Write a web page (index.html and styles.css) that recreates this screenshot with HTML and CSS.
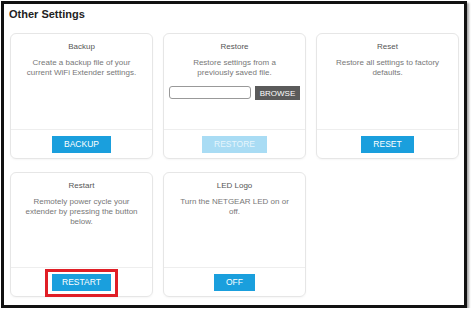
FILE: index.html
```html
<!DOCTYPE html>
<html lang="en">
  <head>
    <meta charset="UTF-8" />
    <meta name="viewport" content="width=device-width, initial-scale=1.0" />
    <title>Other Settings</title>
    <link rel="stylesheet" href="styles.css">
  </head>
  <body>
    <div class="frame">
      <h2 class="section-title">Other Settings</h2>
      <div class="grid">
        <div class="card">
          <div class="card-body">
            <h3>Backup</h3>
            <p>Create a backup file of your current WiFi Extender settings.</p>
          </div>
          <div class="card-foot">
            <button class="btn">BACKUP</button>
          </div>
        </div>
        <div class="card">
          <div class="card-body">
            <h3>Restore</h3>
            <p>Restore settings from a previously saved file.</p>
            <div class="file-row">
              <input type="text" class="file-input" />
              <button class="btn-browse">BROWSE</button>
            </div>
          </div>
          <div class="card-foot">
            <button class="btn" disabled>RESTORE</button>
          </div>
        </div>
        <div class="card">
          <div class="card-body">
            <h3>Reset</h3>
            <p>Restore all settings to factory defaults.</p>
          </div>
          <div class="card-foot">
            <button class="btn">RESET</button>
          </div>
        </div>
        <div class="card">
          <div class="card-body">
            <h3>Restart</h3>
            <p>Remotely power cycle your extender by pressing the button below.</p>
          </div>
          <div class="card-foot">
            <button class="btn highlight">RESTART</button>
          </div>
        </div>
        <div class="card">
          <div class="card-body">
            <h3>LED Logo</h3>
            <p>Turn the NETGEAR LED on or off.</p>
          </div>
          <div class="card-foot">
            <button class="btn">OFF</button>
          </div>
        </div>
      </div>
    </div>
  </body>
</html>
```

FILE: styles.css
```css
body {
  margin: 0;
  background: #fff;
  font-family: "Liberation Sans", Arial, sans-serif;
}
.frame {
  box-sizing: border-box;
  width: 466px;
  height: 307px;
  margin: 1px 0 0 1px;
  border: 3px solid #111;
  box-shadow: 2px 2px 2px rgba(0, 0, 0, 0.35);
  background: #fff;
}
.section-title {
  margin: 0;
  padding: 3px 0 0 5px;
  font-size: 11px;
  line-height: 14px;
  font-weight: bold;
  color: #222;
}
.grid {
  display: grid;
  grid-template-columns: repeat(3, minmax(0, 1fr));
  grid-template-rows: 126px 125px;
  column-gap: 10px;
  row-gap: 13px;
  padding: 12px 5px 0 6px;
}
.card {
  display: flex;
  flex-direction: column;
  border: 1px solid #e6e6e6;
  border-radius: 6px;
  box-shadow: 0 1px 2px rgba(0, 0, 0, 0.04);
}
.card-body {
  flex: 1;
  padding: 8px 5px 0;
  text-align: center;
}
.card-body h3 {
  margin: 0 0 6px;
  font-size: 8px;
  line-height: 10px;
  font-weight: normal;
  color: #555;
}
.card-body p {
  margin: 0;
  padding: 0 9px;
  font-size: 8px;
  line-height: 10px;
  color: #777;
}
.file-row {
  display: flex;
  justify-content: center;
  align-items: flex-start;
  gap: 4px;
  margin-top: 8px;
}
.file-input {
  box-sizing: border-box;
  width: 82px;
  height: 13px;
  padding: 0;
  border: 1px solid #999;
  border-radius: 3px;
}
.btn-browse {
  height: 14px;
  width: 45px;
  padding: 0;
  border: none;
  background: #5b5b5b;
  color: #fff;
  font-family: inherit;
  font-size: 8px;
}
.card-foot {
  box-sizing: border-box;
  height: 29px;
  border-top: 1px solid #eee;
  display: flex;
  align-items: center;
  justify-content: center;
}
.btn {
  position: relative;
  height: 17px;
  padding: 0 12px;
  border: none;
  background: #1a9fdd;
  color: #fff;
  font-family: inherit;
  font-size: 8.5px;
}
.btn:disabled {
  background: #a9dcf4;
  color: #e6f5fc;
}
.highlight {
  padding: 0 10px;
}
.highlight::after {
  content: "";
  position: absolute;
  top: -5px;
  bottom: -6px;
  left: -7px;
  right: -7px;
  border: 3px solid #e01e26;
}
```
